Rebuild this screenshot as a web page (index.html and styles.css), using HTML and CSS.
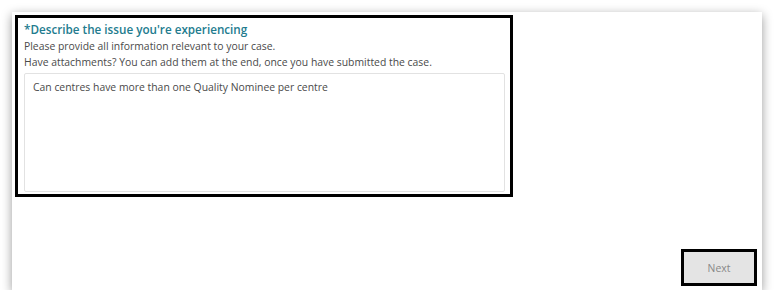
FILE: index.html
```html
<!DOCTYPE html>
<html>

<head>
  <meta charset="UTF-8">
  <meta name="viewport" content="width=device-width, initial-scale=1">
  <title>Describe the issue</title>
  <link rel="stylesheet" href="styles.css">
</head>

<body>
  <div class="card">
    <div class="issue">
      <div class="issue-title">*Describe the issue you're experiencing</div>
      <div class="issue-help">Please provide all information relevant to your case.</div>
      <div class="issue-help">Have attachments? You can add them at the end, once you have submitted the case.</div>
      <div class="issue-text">Can centres have more than one Quality Nominee per centre</div>
    </div>
    <div class="footer">
      <button class="next">Next</button>
    </div>
  </div>
</body>

</html>
```

FILE: styles.css
```css
body {
  margin: 0;
  background-color: #ffffff;
  font-family: "Open Sans", "Noto Sans", sans-serif;
}

.card {
  display: flex;
  flex-direction: column;
  box-sizing: border-box;
  width: 750px;
  height: 278px;
  margin: 12px 0 0 12px;
  padding: 3px 5px 4px 3px;
  background-color: #ffffff;
  box-shadow: 0 3px 10px rgba(0, 0, 0, 0.4);
}

.issue {
  box-sizing: border-box;
  width: 498px;
  height: 182px;
  padding: 3px 5px 2px 6px;
  border: 3px solid #000000;
  display: flex;
  flex-direction: column;
}

.issue-title {
  font-size: 11.7px;
  font-weight: 600;
  color: #227b8e;
  line-height: 17px;
}

.issue-help {
  font-size: 10.4px;
  color: #4a4a4a;
  line-height: 16px;
}

.issue-text {
  flex: 1;
  margin-top: 3px;
  padding: 6px 8px 3px;
  border: 1px solid #e2e2e2;
  border-radius: 2px;
  font-size: 10.4px;
  color: #4a4a4a;
}

.footer {
  flex: 1;
  display: flex;
  justify-content: flex-end;
  align-items: flex-end;
}

.next {
  width: 76px;
  height: 37px;
  border: 3px solid #000000;
  background-color: #e4e4e4;
  font-family: "Open Sans", "Noto Sans", sans-serif;
  font-size: 10.4px;
  color: #888888;
}
```
